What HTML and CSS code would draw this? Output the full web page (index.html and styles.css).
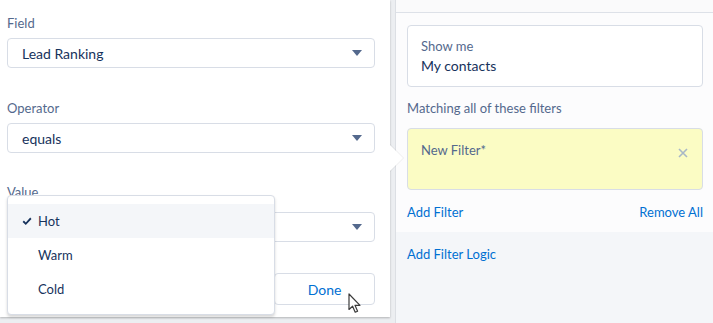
FILE: index.html
```html
<!DOCTYPE html>
<html lang="en">
<head>
    <meta charset="UTF-8">
    <title>Filters</title>
    <link rel="stylesheet" href="styles.css">
</head>
<body>
    <div class="screen">
        <!-- Filter editor popover -->
        <div class="popover">
            <div class="form-group">
                <label class="form-label">Field</label>
                <div class="select">
                    <span>Lead Ranking</span>
                    <span class="caret"></span>
                </div>
            </div>
            <div class="form-group">
                <label class="form-label">Operator</label>
                <div class="select">
                    <span>equals</span>
                    <span class="caret"></span>
                </div>
            </div>
            <div class="form-group">
                <label class="form-label value-label">Value</label>
                <div class="select">
                    <span></span>
                    <span class="caret"></span>
                </div>
            </div>
            <div class="actions">
                <button class="done-btn">Done</button>
            </div>

            <!-- Open picklist -->
            <ul class="picklist">
                <li class="picklist-item selected">
                    <svg class="check" width="10" height="9" viewBox="0 0 10 9"><path d="M0.6 4.9 L1.9 3.6 L3.8 5.5 L8.2 0.6 L9.5 1.9 L3.8 8.1 Z" fill="#16325c"/></svg>
                    Hot
                </li>
                <li class="picklist-item">Warm</li>
                <li class="picklist-item">Cold</li>
            </ul>

            <span class="nub"></span>

            <svg class="cursor" width="14" height="22" viewBox="0 0 14 22"><path d="M1 1 L1 16.5 L4.6 13.2 L7.2 19.2 L9.6 18.2 L7 12.3 L12 12.3 Z" fill="#fff" stroke="#3b3b3b" stroke-width="1.2" stroke-linejoin="round"/></svg>
        </div>

        <!-- Filters panel -->
        <div class="filters">
            <div class="filters-header"></div>
            <div class="filters-body">
                <div class="filter-card">
                    <div class="card-label">Show me</div>
                    <div class="card-value">My contacts</div>
                </div>
                <div class="section-title">Matching all of these filters</div>
                <div class="filter-card new-filter">
                    <div class="card-label">New Filter*</div>
                    <svg class="remove" width="10" height="10" viewBox="0 0 10 10"><path d="M1 1 L9 9 M9 1 L1 9" stroke="#a8b7c7" stroke-width="1.6"/></svg>
                </div>
                <div class="link-row">
                    <a href="#">Add Filter</a>
                    <a href="#">Remove All</a>
                </div>
            </div>
            <div class="filters-footer">
                <a href="#">Add Filter Logic</a>
            </div>
        </div>
    </div>
</body>
</html>
```

FILE: styles.css
```css
/* General Styling */
body {
    margin: 0;
    padding: 0;
    font-family: 'Lato', 'Open Sans', sans-serif;
    color: #16325c;
    background-color: #eceef1;
}

.screen {
    display: flex;
    height: 323px;
    overflow: hidden;
}

a {
    color: #0070d2;
    text-decoration: none;
    font-size: 13px;
}

/* Popover */
.popover {
    position: relative;
    z-index: 2;
    width: 390px;
    height: 317px;
    box-sizing: border-box;
    padding: 15px 15px 0 7px;
    background-color: #ffffff;
    box-shadow: 0 1px 2px rgba(0, 0, 0, 0.25);
}

.form-group {
    margin-bottom: 32px;
}

.form-label {
    display: block;
    font-size: 13px;
    line-height: 16px;
    color: #54698d;
    margin-bottom: 7px;
}

.value-label {
    margin-top: -1px;
    margin-bottom: 12px;
}

.select {
    display: flex;
    align-items: center;
    justify-content: space-between;
    height: 30px;
    box-sizing: border-box;
    padding: 0 12px 0 14px;
    border: 1px solid #d8dde6;
    border-radius: 4px;
    font-size: 14px;
}

.caret {
    width: 0;
    height: 0;
    border-left: 5px solid transparent;
    border-right: 5px solid transparent;
    border-top: 6px solid #54698d;
}

.actions {
    display: flex;
    justify-content: flex-end;
    margin-top: -1px;
}

.done-btn {
    width: 101px;
    height: 32px;
    background-color: #ffffff;
    border: 1px solid #d8dde6;
    border-radius: 4px;
    color: #0070d2;
    font-family: inherit;
    font-size: 14px;
    padding: 0;
}

/* Picklist dropdown (overlays the form) */
.picklist {
    position: absolute;
    left: 7px;
    top: 195px;
    width: 268px;
    margin: 0;
    padding: 8px 0;
    list-style: none;
    box-sizing: border-box;
    background-color: #ffffff;
    border: 1px solid #d8dde6;
    border-radius: 4px;
    box-shadow: 0 2px 3px rgba(0, 0, 0, 0.16);
}

.picklist-item {
    display: flex;
    align-items: center;
    height: 34px;
    padding-left: 30px;
    font-size: 13px;
}

.picklist-item.selected {
    background-color: #f4f6f9;
    padding-left: 14px;
}

.check {
    margin-right: 6px;
}

.nub {
    position: absolute;
    left: 389px;
    top: 144px;
    width: 0;
    height: 0;
    border-top: 14px solid transparent;
    border-bottom: 14px solid transparent;
    border-left: 14px solid #ffffff;
    filter: drop-shadow(1px 0 0 rgba(0, 0, 0, 0.06));
}

.cursor {
    position: absolute;
    left: 348px;
    top: 293px;
}

/* Filters panel */
.filters {
    flex: 1;
    display: flex;
    flex-direction: column;
    margin-left: 5px;
    background-color: #fcfcfd;
    border-left: 1px solid #dcdfe4;
}

.filters-header {
    height: 12px;
    background-color: #fafafb;
    border-bottom: 1px solid #dde1e8;
}

.filters-body {
    padding: 12px 10px 12px 11px;
}

.filter-card {
    position: relative;
    height: 62px;
    box-sizing: border-box;
    padding: 12px 13px;
    border: 1px solid #d8dde6;
    border-radius: 4px;
    background-color: #ffffff;
}

.card-label {
    font-size: 13px;
    line-height: 16px;
    color: #54698d;
}

.card-value {
    font-size: 14px;
    line-height: 20px;
    margin-top: 2px;
}

.section-title {
    font-size: 13px;
    line-height: 16px;
    color: #54698d;
    margin: 13px 0 12px;
}

.new-filter {
    background-color: #fbfcc4;
    padding-top: 13px;
}

.remove {
    position: absolute;
    right: 14px;
    top: 19px;
}

.link-row {
    display: flex;
    justify-content: space-between;
    margin-top: 14px;
    line-height: 16px;
}

.filters-footer {
    flex: 1;
    padding: 13px 11px;
    background-color: #f4f6f9;
    line-height: 16px;
}
```
